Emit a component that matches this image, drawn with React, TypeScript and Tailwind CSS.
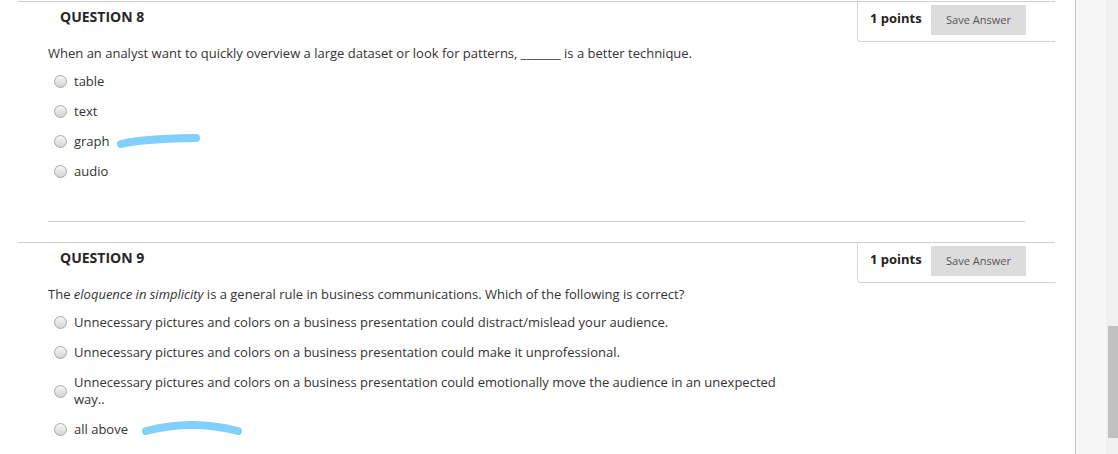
import React from "react";

type Option = { label: string };

interface QuestionProps {
  number: number;
  prompt: React.ReactNode;
  options: Option[];
}

const Radio = () => (
  <span className="inline-block w-[13px] h-[13px] shrink-0 rounded-full border border-[#a9a9a9] bg-gradient-to-b from-[#f7f7f7] to-[#d4d4d4]" />
);

const Question = ({ number, prompt, options }: QuestionProps) => {
  return (
    <div className="w-[1037px]">
      <div className="flex justify-between border-t border-[#cfcfcf] h-[41px]">
        <h3 className="pl-[42px] pt-[5px] text-[14px] leading-[20px] font-bold text-[#262626]">
          QUESTION {number}
        </h3>
        <div className="w-[198px] h-[40px] flex items-start border-l border-b border-[#d4d4d4] rounded-bl-[4px] pl-[12px] pt-[3px] gap-[10px]">
          <span className="whitespace-nowrap text-[13px] leading-[30px] -mt-[2px] font-bold text-[#222] w-[51px]">1 points</span>
          <button className="w-[95px] h-[30px] bg-[#dcdcdc] text-[11px] text-[#555]">
            Save Answer
          </button>
        </div>
      </div>
      <div className="pl-[30px]">
        <p className="mt-[3px] text-[13px] leading-[17px] text-[#333]">{prompt}</p>
        <ul className="mt-[11px] flex flex-col gap-[13px]">
          {options.map((o, i) => (
            <li key={i} className="flex items-center pl-[6px] gap-[7px]">
              <Radio />
              <span className="w-[715px] text-[13px] leading-[17px] text-[#333]">{o.label}</span>
            </li>
          ))}
        </ul>
      </div>
    </div>
  );
};

export default function App() {
  return (
    <div
      className="relative flex h-[454px] w-[1118px] overflow-hidden bg-white"
      style={{ fontFamily: '"Open Sans", "Noto Sans", sans-serif' }}
    >
      <main className="w-[1075px] pl-[18px] pt-px">
        <Question
          number={8}
          prompt="When an analyst want to quickly overview a large dataset or look for patterns, _______ is a better technique."
          options={[{ label: "table" }, { label: "text" }, { label: "graph" }, { label: "audio" }]}
        />
        <div className="ml-[30px] mt-[41px] w-[977px] border-t border-[#d0d0d0]" />
        <div className="mt-[20px]">
          <Question
            number={9}
            prompt={
              <>
                The <em>eloquence in simplicity</em> is a general rule in business communications. Which of the following is correct?
              </>
            }
            options={[
              { label: "Unnecessary pictures and colors on a business presentation could distract/mislead your audience." },
              { label: "Unnecessary pictures and colors on a business presentation could make it unprofessional." },
              {
                label:
                  "Unnecessary pictures and colors on a business presentation could emotionally move the audience in an unexpected way..",
              },
              { label: "all above" },
            ]}
          />
        </div>
      </main>

      <aside className="flex w-[43px] border-l border-[#c8c8c8]">
        <div className="w-[30px] bg-[#f7f7f7]" />
        <div className="w-[12px] bg-[#f0f0f0] pt-[326px] pl-[2px]">
          <div className="h-[112px] w-[10px] bg-[#c1c1c1]" />
        </div>
      </aside>

      {/* hand-drawn highlight marks */}
      <svg className="absolute left-0 top-0 pointer-events-none" width="1118" height="454">
        <path d="M121 144 Q140 139 196 138" stroke="#80d0fb" strokeWidth="8" strokeLinecap="round" fill="none" />
        <path d="M146 431 Q192 419 238 431" stroke="#80d0fb" strokeWidth="8" strokeLinecap="round" fill="none" />
      </svg>
    </div>
  );
}
